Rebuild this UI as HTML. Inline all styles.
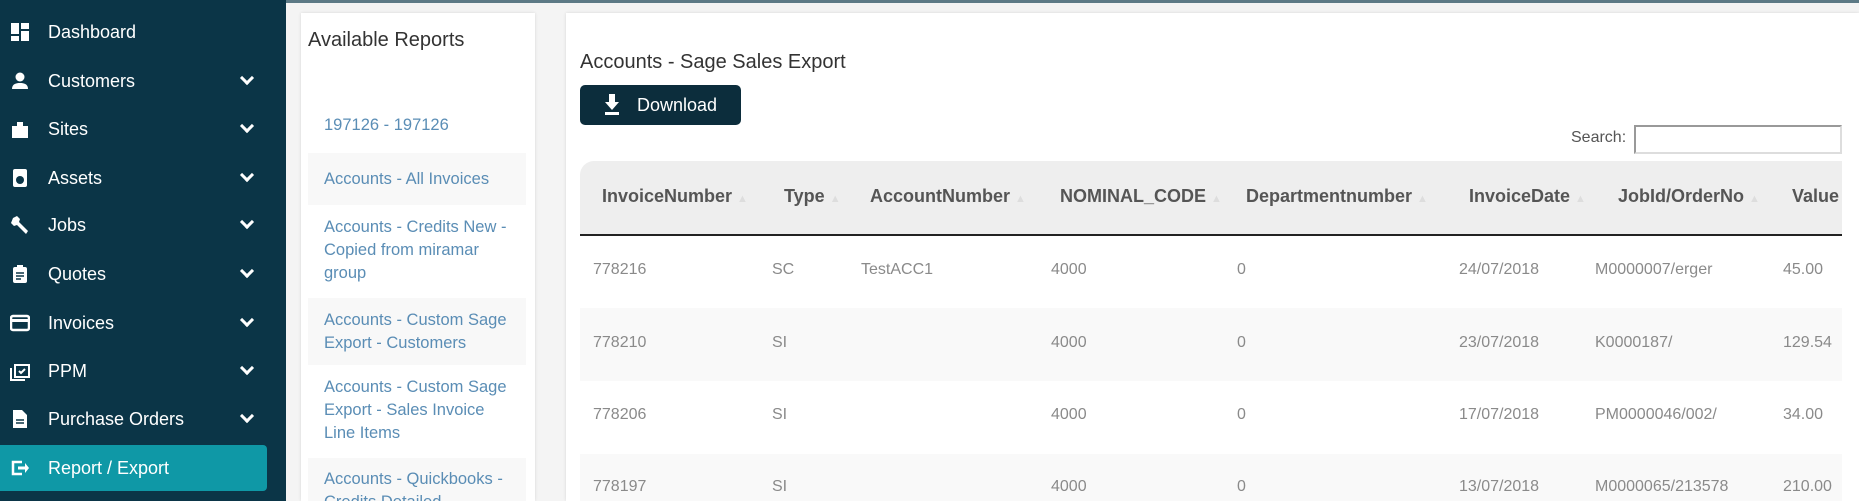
<!DOCTYPE html>
<html style="overflow:hidden;width:1859px;height:501px"><head><meta charset="utf-8"><style>
*{margin:0;padding:0;box-sizing:border-box}
body{width:1859px;height:501px;overflow:hidden;background:#f4f4f4;font-family:"Liberation Sans",sans-serif;position:relative}
.sb{position:absolute;left:0;top:0;width:286px;height:501px;background:#0b3547}
.it{position:absolute;left:0;width:267px;height:46px;color:#fff;font-size:18px;line-height:46px}
.it .ic{position:absolute;left:10px;top:13px;width:20px;height:20px}
.it .tx{position:absolute;left:48px}
.it .ch{position:absolute;left:242px;top:15px;width:10px;height:10px;border-right:3px solid #fff;border-bottom:3px solid #fff;transform:rotate(45deg)}
.act{background:#0f98a6;border-radius:0 4px 4px 0}
.top{position:absolute;left:286px;top:0;right:0;height:3px;background:#5d7a86}
.card{position:absolute;background:#fff;box-shadow:0 0 3px rgba(0,0,0,.12)}
.rep{position:absolute;left:308px;width:218px;color:#5a8db5;font-size:16.5px;line-height:23px;padding-left:16px;white-space:nowrap;overflow:hidden}
.rep.g{background:#f8f8f8}
.th{position:absolute;top:161px;left:580px;width:1262px;height:75px;background:#eeeeee;border-radius:14px 0 0 0;border-bottom:2px solid #222}
.h{position:absolute;top:186px;font-weight:bold;font-size:18px;color:#555}
.s{color:#ddd;font-size:11px;margin-left:5px}
.row{position:absolute;left:580px;width:1262px;height:73px}
.d{position:absolute;font-size:16px;color:#8a8a8a}
</style></head><body>
<div class="sb">
<div class="it" style="top:9px"><svg class="ic" viewBox="0 0 20 20"><path fill="#fff" d="M1 1h8v11H1zM11 1h8v6h-8zM11 9h8v10h-8zM1 14h8v5H1z"/></svg><span class="tx">Dashboard</span></div>
<div class="it" style="top:58px"><svg class="ic" viewBox="0 0 20 20"><circle cx="10" cy="6" r="4.5" fill="#fff"/><path fill="#fff" d="M2 18c0-5 4-6 8-6s8 1 8 6z"/></svg><span class="tx">Customers</span><span class="ch"></span></div>
<div class="it" style="top:106px"><svg class="ic" viewBox="0 0 20 20"><path fill="#fff" d="M2 7h5V3h6v4h5v12H2z"/></svg><span class="tx">Sites</span><span class="ch"></span></div>
<div class="it" style="top:155px"><svg class="ic" viewBox="0 0 20 20"><rect x="3" y="1" width="14" height="18" rx="2" fill="#fff"/><circle cx="10" cy="12" r="4" fill="#0b3547"/></svg><span class="tx">Assets</span><span class="ch"></span></div>
<div class="it" style="top:202px"><svg class="ic" viewBox="0 0 20 20"><path fill="#fff" d="M3 3l4-2 3 3-1 3 9 9-2 3-9-9-3 1-3-3z"/></svg><span class="tx">Jobs</span><span class="ch"></span></div>
<div class="it" style="top:251px"><svg class="ic" viewBox="0 0 20 20"><rect x="3" y="3" width="14" height="16" rx="2" fill="#fff"/><rect x="7" y="1" width="6" height="4" fill="#fff"/><path stroke="#0b3547" stroke-width="1.5" d="M6 9h8M6 12h8M6 15h5"/></svg><span class="tx">Quotes</span><span class="ch"></span></div>
<div class="it" style="top:300px"><svg class="ic" viewBox="0 0 20 20"><rect x="1" y="3" width="18" height="14" rx="2" fill="none" stroke="#fff" stroke-width="2.5"/><rect x="1" y="6" width="18" height="3" fill="#fff"/></svg><span class="tx">Invoices</span><span class="ch"></span></div>
<div class="it" style="top:348px"><svg class="ic" viewBox="0 0 20 20"><path fill="none" stroke="#fff" stroke-width="2" d="M5 4h14v12H5zM1 7v12h14M9 10l2 2 4-4"/></svg><span class="tx">PPM</span><span class="ch"></span></div>
<div class="it" style="top:396px"><svg class="ic" viewBox="0 0 20 20"><path fill="#fff" d="M3 1h9l5 5v13H3z"/><path stroke="#0b3547" stroke-width="1.5" d="M6 11h8M6 14h8"/></svg><span class="tx">Purchase Orders</span><span class="ch"></span></div>
<div class="it act" style="top:445px"><svg class="ic" viewBox="0 0 20 20"><path fill="none" stroke="#fff" stroke-width="2.5" d="M12 4H3v12h9"/><path fill="#fff" d="M8 8.5h7V5l4 5-4 5v-3.5H8z"/></svg><span class="tx">Report / Export</span></div>
</div>
<div class="top"></div>
<div class="card" style="left:301px;top:13px;width:234px;height:488px"></div>
<div style="position:absolute;left:308px;top:29px;font-size:20px;color:#333">Available Reports</div>
<div class="rep" style="top:114px">197126 - 197126</div>
<div class="rep g" style="top:153px;height:52px;padding-top:15px">Accounts - All Invoices</div>
<div class="rep" style="top:216px">Accounts - Credits New -<br>Copied from miramar<br>group</div>
<div class="rep g" style="top:298px;height:67px;padding-top:11px">Accounts - Custom Sage<br>Export - Customers</div>
<div class="rep" style="top:376px">Accounts - Custom Sage<br>Export - Sales Invoice<br>Line Items</div>
<div class="rep g" style="top:458px;height:43px;padding-top:10px">Accounts - Quickbooks -<br>Credits Detailed</div>
<div class="card" style="left:566px;top:13px;width:1293px;height:488px"></div>
<div style="position:absolute;left:580px;top:51px;font-size:20px;color:#333">Accounts - Sage Sales Export</div>
<div style="position:absolute;left:580px;top:85px;width:161px;height:40px;background:#0c2d3c;border-radius:5px;color:#fff;font-size:18px;line-height:40px;padding-left:57px">Download
<svg style="position:absolute;left:23px;top:9px" width="18" height="22" viewBox="0 0 18 22"><path fill="#fff" d="M6 0h6v8h4l-7 8-7-8h4z"/><rect x="2" y="18" width="14" height="3" fill="#fff"/></svg></div>
<div style="position:absolute;left:1571px;top:129px;font-size:16px;color:#555">Search:</div>
<div style="position:absolute;left:1634px;top:125px;width:208px;height:29px;border:2px solid #999;border-right-color:#ddd;border-bottom-color:#ddd"></div>
<div class="th"></div>
<div class="h" style="left:602px">InvoiceNumber<span class="s">&#9650;</span></div>
<div class="h" style="left:784px">Type<span class="s">&#9650;</span></div>
<div class="h" style="left:870px">AccountNumber<span class="s">&#9650;</span></div>
<div class="h" style="left:1060px">NOMINAL_CODE<span class="s">&#9650;</span></div>
<div class="h" style="left:1246px">Departmentnumber<span class="s">&#9650;</span></div>
<div class="h" style="left:1469px">InvoiceDate<span class="s">&#9650;</span></div>
<div class="h" style="left:1618px">JobId/OrderNo<span class="s">&#9650;</span></div>
<div class="h" style="left:1792px">Value</div>
<div class="row" style="top:308px;background:#f9f9f9"></div>
<div class="row" style="top:454px;height:47px;background:#f9f9f9"></div>
<div style="position:absolute;top:261px;left:0">
<div class="d" style="left:593px">778216</div><div class="d" style="left:772px">SC</div><div class="d" style="left:861px">TestACC1</div><div class="d" style="left:1051px">4000</div><div class="d" style="left:1237px">0</div><div class="d" style="left:1459px">24/07/2018</div><div class="d" style="left:1595px">M0000007/erger</div><div class="d" style="left:1783px">45.00</div></div>
<div style="position:absolute;top:334px;left:0">
<div class="d" style="left:593px">778210</div><div class="d" style="left:772px">SI</div><div class="d" style="left:1051px">4000</div><div class="d" style="left:1237px">0</div><div class="d" style="left:1459px">23/07/2018</div><div class="d" style="left:1595px">K0000187/</div><div class="d" style="left:1783px">129.54</div></div>
<div style="position:absolute;top:406px;left:0">
<div class="d" style="left:593px">778206</div><div class="d" style="left:772px">SI</div><div class="d" style="left:1051px">4000</div><div class="d" style="left:1237px">0</div><div class="d" style="left:1459px">17/07/2018</div><div class="d" style="left:1595px">PM0000046/002/</div><div class="d" style="left:1783px">34.00</div></div>
<div style="position:absolute;top:478px;left:0">
<div class="d" style="left:593px">778197</div><div class="d" style="left:772px">SI</div><div class="d" style="left:1051px">4000</div><div class="d" style="left:1237px">0</div><div class="d" style="left:1459px">13/07/2018</div><div class="d" style="left:1595px">M0000065/213578</div><div class="d" style="left:1783px">210.00</div></div>
</body></html>
